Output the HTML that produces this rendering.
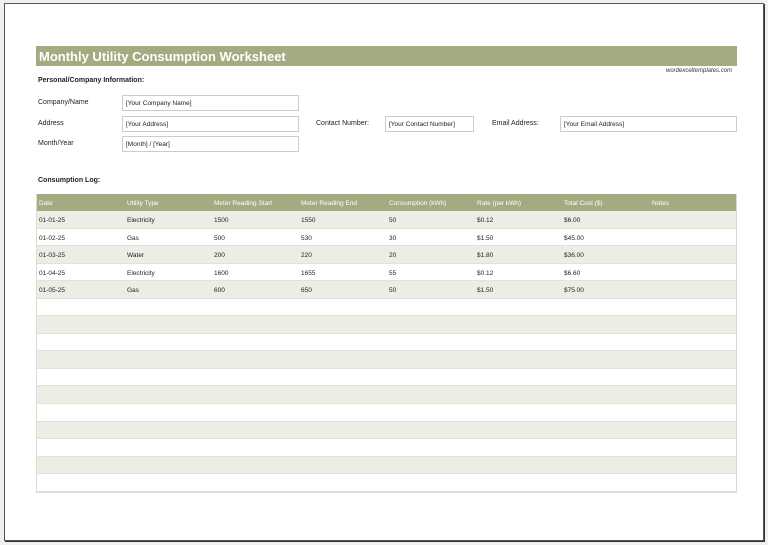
<!DOCTYPE html>
<html><head><meta charset="utf-8"><style>
body{margin:0;width:768px;height:545px;background:#f0f0f0;position:relative;overflow:hidden;font-family:"Liberation Sans",sans-serif;}
.page{position:absolute;left:4px;top:3px;width:758px;height:536px;background:#fff;border:1px solid #555;box-shadow:1px 1px 0 #333;}
.a{position:absolute;white-space:nowrap;}
.t{position:absolute;left:36px;top:46px;width:701px;height:20px;background:#a5aa81;color:#fff;font-weight:bold;font-size:13px;line-height:21px;text-indent:3px;}
.lbl{font-size:7px;color:#222;}
.box{position:absolute;border:1px solid #ccc;font-size:6.5px;line-height:15px;padding-left:3px;box-sizing:border-box;height:16px;color:#222;}
.tbl{position:absolute;left:36px;top:194px;width:701px;border:1px solid #dcdcd0;border-top:none;box-sizing:border-box;}
.r{height:17.56px;position:relative;font-size:6.5px;color:#222;border-bottom:1px solid #e2e2d8;box-sizing:border-box;}
.r span{position:absolute;top:0;line-height:20px;}
.h{background:#a5aa81;color:#fff;height:17px;border:none;}
.g{background:#ecede5;}
</style></head><body>
<div class="page"></div>
<div class="t">Monthly Utility Consumption Worksheet</div>
<div class="a" style="left:666px;top:68px;font-size:6px;font-style:italic;color:#333">wordexceltemplates.com</div>
<div class="a" style="left:38px;top:77px;font-size:7px;font-weight:bold;color:#222">Personal/Company Information:</div>
<div class="a lbl" style="left:38px;top:99px">Company/Name</div>
<div class="a lbl" style="left:38px;top:120px">Address</div>
<div class="a lbl" style="left:38px;top:140px">Month/Year</div>
<div class="a lbl" style="left:316px;top:120px">Contact Number:</div>
<div class="a lbl" style="left:492px;top:120px">Email Address:</div>
<div class="box" style="left:122px;top:95px;width:177px">[Your Company Name]</div>
<div class="box" style="left:122px;top:116px;width:177px">[Your Address]</div>
<div class="box" style="left:122px;top:136px;width:177px">[Month] / [Year]</div>
<div class="box" style="left:385px;top:116px;width:89px">[Your Contact Number]</div>
<div class="box" style="left:560px;top:116px;width:177px">[Your Email Address]</div>
<div class="a" style="left:38px;top:177px;font-size:7px;font-weight:bold;color:#222">Consumption Log:</div>
<div class="tbl">
<div class="r h"><span style="left:2px">Date</span><span style="left:90px">Utility Type</span><span style="left:177px">Meter Reading Start</span><span style="left:264px">Meter Reading End</span><span style="left:352px">Consumption (kWh)</span><span style="left:440px">Rate (per kWh)</span><span style="left:527px">Total Cost ($)</span><span style="left:615px">Notes</span></div>
<div class="r g"><span style="left:2px">01-01-25</span><span style="left:90px">Electricity</span><span style="left:177px">1500</span><span style="left:264px">1550</span><span style="left:352px">50</span><span style="left:440px">$0.12</span><span style="left:527px">$6.00</span></div>
<div class="r"><span style="left:2px">01-02-25</span><span style="left:90px">Gas</span><span style="left:177px">500</span><span style="left:264px">530</span><span style="left:352px">30</span><span style="left:440px">$1.50</span><span style="left:527px">$45.00</span></div>
<div class="r g"><span style="left:2px">01-03-25</span><span style="left:90px">Water</span><span style="left:177px">200</span><span style="left:264px">220</span><span style="left:352px">20</span><span style="left:440px">$1.80</span><span style="left:527px">$36.00</span></div>
<div class="r"><span style="left:2px">01-04-25</span><span style="left:90px">Electricity</span><span style="left:177px">1600</span><span style="left:264px">1655</span><span style="left:352px">55</span><span style="left:440px">$0.12</span><span style="left:527px">$6.60</span></div>
<div class="r g"><span style="left:2px">01-05-25</span><span style="left:90px">Gas</span><span style="left:177px">600</span><span style="left:264px">650</span><span style="left:352px">50</span><span style="left:440px">$1.50</span><span style="left:527px">$75.00</span></div>
<div class="r"></div><div class="r g"></div><div class="r"></div><div class="r g"></div><div class="r"></div><div class="r g"></div><div class="r"></div><div class="r g"></div><div class="r"></div><div class="r g"></div><div class="r"></div>
</div>
</body></html>
